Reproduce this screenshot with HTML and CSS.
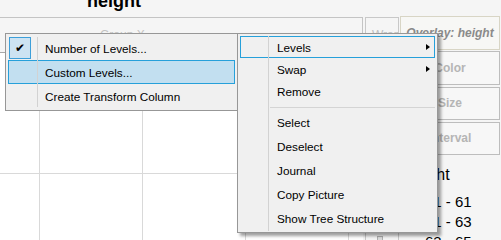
FILE: index.html
```html
<!DOCTYPE html>
<html>
<head>
<meta charset="utf-8">
<link rel="stylesheet" href="styles.css">
</head>
<body>
<div class="page">
  <div class="left">
    <div class="title"><span>height</span></div>
    <div class="groupx"><span>Group X</span></div>
    <div class="plot"></div>
  </div>
  <div class="wrapcol">
    <span class="ghost">Wrap</span>
    <span class="grip"></span>
  </div>
  <div class="side">
    <div class="overlay">Overlay: height</div>
    <div class="btn b1">Color</div>
    <div class="btn b2">Size</div>
    <div class="btn b2">Interval</div>
    <div class="legend">
      <div class="ltitle">height</div>
      <div class="lrows">
        <div class="lrow"><i class="dot c1"></i>51 - 61</div>
        <div class="lrow"><i class="dot c2"></i>61 - 63</div>
        <div class="lrow"><i class="dot c3"></i>63 - 65</div>
      </div>
    </div>
  </div>

  <div class="menu m1">
    <div class="item r24"><span class="gut chk">&#10004;</span><span>Number of Levels...</span></div>
    <div class="item r24 hl"><span class="gut"></span><span>Custom Levels...</span></div>
    <div class="item r24"><span class="gut"></span><span>Create Transform Column</span></div>
  </div>

  <div class="menu m2">
    <div class="item r22 hlo"><span class="gut"></span><span>Levels</span><i class="arr"></i></div>
    <div class="item r22"><span class="gut"></span><span>Swap</span><i class="arr"></i></div>
    <div class="item r22"><span class="gut"></span><span>Remove</span></div>
    <div class="sep"></div>
    <div class="item r24"><span class="gut"></span><span>Select</span></div>
    <div class="item r24"><span class="gut"></span><span>Deselect</span></div>
    <div class="item r24"><span class="gut"></span><span>Journal</span></div>
    <div class="item r24"><span class="gut"></span><span>Copy Picture</span></div>
    <div class="item r24"><span class="gut"></span><span>Show Tree Structure</span></div>
  </div>
</div>
</body>
</html>
```
FILE: styles.css
```css
html, body {
  margin: 0;
  padding: 0;
  background: #f5f5f5;
}
body {
  font-family: "Liberation Sans", Arial, sans-serif;
}
.page {
  position: relative;
  width: 501px;
  height: 240px;
  overflow: hidden;
  display: flex;
  align-items: flex-start;
}
.left {
  width: 363px;
  height: 240px;
  display: flex;
  flex-direction: column;
}
.title {
  height: 17px;
  overflow: hidden;
  padding-left: 87px;
  font-weight: bold;
  font-size: 18px;
  color: #000;
}
.title span {
  display: block;
  line-height: 20px;
  margin-top: -9px;
}
.groupx {
  height: 35px;
  box-sizing: border-box;
  border-top: 1px solid #c4c4c4;
  border-right: 1px solid #c4c4c4;
  padding-left: 100px;
  font-size: 12px;
  line-height: 34px;
  color: #c2c2c2;
}
.plot {
  flex: 1;
  background-color: #fff;
  border-top: 1px solid #a8a8a8;
  background-image:
    linear-gradient(#d9d9d9, #d9d9d9),
    repeating-linear-gradient(90deg, transparent 0 39px, #d9d9d9 39px 40px, transparent 40px 103px);
  background-size: 100% 1px, 100% 100%;
  background-position: 0 120px, 0 0;
  background-repeat: no-repeat;
}
.wrapcol {
  margin-left: 2px;
  margin-top: 17px;
  width: 34px;
  height: 240px;
  box-sizing: border-box;
  border: 1px solid #c8c8c8;
  display: flex;
  flex-direction: column;
  overflow: hidden;
}
.ghost {
  padding-top: 9px;
  padding-left: 6px;
  font-size: 12px;
  line-height: 16px;
  color: #bdbdbd;
  white-space: nowrap;
}
.grip {
  margin-top: 193px;
  margin-left: 11px;
  width: 6px;
  height: 6px;
  box-sizing: border-box;
  border: 1px solid #b0b0b0;
  background: #dcdcdc;
}
.side {
  margin-left: 1px;
  width: 100px;
  display: flex;
  flex-direction: column;
}
.overlay {
  margin-top: 16px;
  height: 34px;
  box-sizing: border-box;
  border: 1px solid #d8d5c5;
  background: #f7f7f5;
  text-align: center;
  line-height: 32px;
  font-size: 12px;
  font-weight: bold;
  font-style: italic;
  color: #8a8a8a;
}
.btn {
  box-sizing: border-box;
  border: 1px solid #bdbdbd;
  background: #f7f7f7;
  text-align: center;
  font-size: 12px;
  font-weight: bold;
  color: #b5b5b5;
}
.b1 {
  margin-top: 1px;
  height: 34px;
  line-height: 32px;
}
.b2 {
  margin-top: 2px;
  height: 33px;
  line-height: 31px;
}
.legend {
  padding-left: 6px;
  color: #000;
}
.ltitle {
  margin-top: 10px;
  font-size: 16px;
  line-height: 20px;
}
.lrows {
  margin-top: 7px;
}
.lrow {
  display: flex;
  align-items: center;
  font-size: 15px;
  line-height: 20px;
  height: 20px;
  white-space: nowrap;
}
.dot {
  display: block;
  width: 5px;
  height: 5px;
  border-radius: 50%;
  margin-left: 5px;
  margin-right: 9px;
}
.c1 { background: #3366cc; }
.c2 { background: #cc3333; }
.c3 { background: #2fa82f; }

/* context menus */
.menu {
  position: absolute;
  top: 33px;
  box-sizing: border-box;
  background: #f0f0f0;
  border: 1px solid #979797;
  padding: 2px;
  font-family: "Liberation Sans", Arial, sans-serif;
  font-size: 11.75px;
  color: #000;
}
.menu::before {
  content: "";
  position: absolute;
  width: 1px;
  background: #d2d2d2;
  z-index: 2;
}
.m1 {
  left: 5px;
  width: 233px;
}
.m1::before {
  left: 31px;
  top: 3px;
  bottom: 3px;
}
.m2 {
  left: 237px;
  width: 201px;
  box-shadow: 3px 3px 3px rgba(0, 0, 0, 0.38);
}
.m2::before {
  left: 30px;
  top: 2px;
  bottom: 1px;
}
.item {
  display: flex;
  align-items: center;
  box-sizing: border-box;
  border: 1px solid transparent;
  white-space: nowrap;
}
.r22 { height: 22px; }
.r24 { height: 24px; }
.gut {
  width: 22px;
  height: 22px;
  margin-right: 14px;
  box-sizing: border-box;
  display: flex;
  align-items: center;
  justify-content: center;
  flex: none;
}
.r22 .gut { height: 20px; }
.chk {
  border: 1px solid #3d9fd9;
  background: #cde3f2;
  font-size: 12px;
  font-family: "DejaVu Sans", sans-serif;
}
.hl {
  border-color: #26a0da;
  background: #c2dff0;
}
.hlo {
  border-color: #26a0da;
}
.arr {
  display: block;
  margin-left: auto;
  margin-right: 4px;
  width: 0;
  height: 0;
  border-left: 4px solid #000;
  border-top: 3.5px solid transparent;
  border-bottom: 3.5px solid transparent;
}
.sep {
  height: 8px;
  padding-top: 5px;
  box-sizing: border-box;
}
.sep::after {
  content: "";
  display: block;
  height: 1px;
  margin-left: 30px;
  background: #d4d4d4;
}
```
